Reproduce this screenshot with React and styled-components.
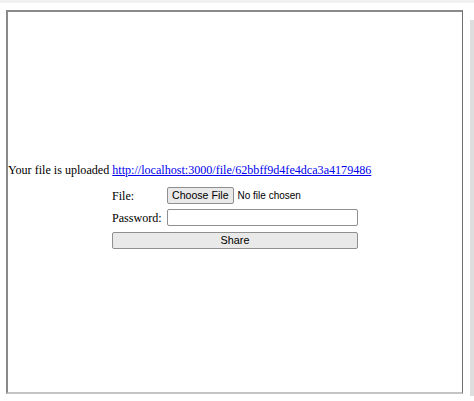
import React from "react";
import styled, { createGlobalStyle } from "styled-components";

const Global = createGlobalStyle`
  html, body { margin: 0; padding: 0; background: #fff; }
  body { width: 474px; height: 401px; overflow: hidden; }
`;

const Page = styled.div`
  display: flex;
  align-items: flex-start;
  width: 474px;
  height: 401px;
  border-top: 3px solid #f1f1f1;
  box-sizing: border-box;
`;

const Frame = styled.div`
  margin: 7px 0 0 6px;
  width: 457px;
  height: 384px;
  box-sizing: border-box;
  border-top: 2px solid #8a8a8a;
  border-left: 2px solid #8a8a8a;
  border-right: 1px solid #6f6f6f;
  border-bottom: 2px solid #c4c4c4;
  padding-top: 149px;
  display: flex;
  flex-direction: column;
  font-family: "Liberation Serif", "Times New Roman", serif;
  font-size: 12.1px;
  color: #000;
`;

const Track = styled.div`
  margin: 17px 0 0 7px;
  width: 4px;
  height: 376px;
  background: #dedede;
`;

const Message = styled.div`
  line-height: 18px;
  white-space: nowrap;
`;

const Link = styled.a`
  color: #0000ee;
  text-decoration: underline;
`;

const Form = styled.form`
  align-self: center;
  margin-top: 8px;
  width: 246px;
  display: grid;
  grid-template-columns: 55px 191px;
  row-gap: 5px;
  align-items: center;
`;

const Label = styled.label`
  line-height: 16px;
`;

const FileCell = styled.div`
  display: flex;
  align-items: center;
  gap: 4px;
  font-family: "Liberation Sans", Arial, sans-serif;
  font-size: 10px;
`;

const NativeButton = styled.button`
  font-family: "Liberation Sans", Arial, sans-serif;
  font-size: ${(p) => (p.$wide ? "10.8px" : "10.6px")};
  height: 17px;
  padding: 0 ${(p) => (p.$wide ? "6px" : "4px")};
  margin: 0;
  background: #e9e9e9;
  border: 1px solid #8f8f8f;
  border-radius: 2px;
  color: #000;
  line-height: 15px;
  grid-column: ${(p) => (p.$wide ? "1 / span 2" : "auto")};
  width: ${(p) => (p.$wide ? "100%" : "auto")};
  margin-top: ${(p) => (p.$wide ? "1px" : "0")};
`;

const Input = styled.input`
  width: 191px;
  height: 17px;
  box-sizing: border-box;
  margin: 0;
  border: 1px solid #8f8f8f;
  border-radius: 2px;
  padding: 0 2px;
`;

export default function App() {
  return (
    <>
      <Global />
      <Page>
        <Frame>
          <Message>
            Your file is uploaded{" "}
            <Link href="#">http://localhost:3000/file/62bbff9d4fe4dca3a4179486</Link>
          </Message>
          <Form onSubmit={(e) => e.preventDefault()}>
            <Label>File:</Label>
            <FileCell>
              <NativeButton type="button">Choose File</NativeButton>
              <span>No file chosen</span>
            </FileCell>
            <Label>Password:</Label>
            <Input type="password" />
            <NativeButton $wide type="submit">Share</NativeButton>
          </Form>
        </Frame>
        <Track />
      </Page>
    </>
  );
}
